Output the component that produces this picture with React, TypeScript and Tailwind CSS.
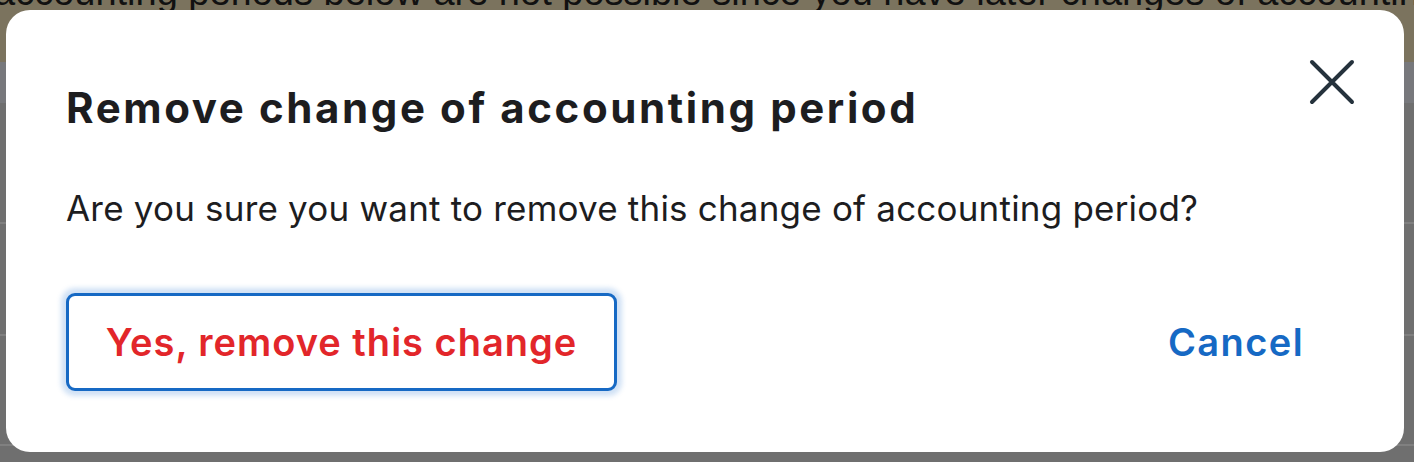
export default function App() {
  return (
    <div className="relative w-[1414px] h-[462px] overflow-hidden bg-[#6f6f6f] font-['Inter',sans-serif]">
      {/* dimmed page behind the dialog */}
      <div className="flex flex-col">
        <div className="h-[62px] bg-[#7b735e] overflow-hidden">
          <p className="-mt-[31px] -ml-[6px] whitespace-nowrap text-[38px] leading-[46px] text-[#111] font-['Liberation_Sans',sans-serif]">
            accounting periods below are not possible since you have later changes of accounting periods
          </p>
        </div>
        <div className="h-[41px] bg-[#77787c]" />
        <div className="h-[121px] border-b-2 border-[#808080]" />
        <div className="h-[112px] border-b-2 border-[#808080]" />
        <div className="h-[110px] border-b-2 border-[#808080]" />
      </div>

      {/* dialog */}
      <div className="absolute left-[6px] top-[10px] w-[1398px] h-[442px] rounded-[24px] bg-white">
        <div className="flex flex-col pl-[60px] pr-[48px] pt-[72px]">
          <div className="flex items-start justify-between">
            <h1 className="text-[42px] leading-[52px] font-bold text-[#1d1d1f] tracking-[2.6px]">
              Remove change of accounting period
            </h1>
            <button className="-mt-[24px] w-[48px] h-[48px] flex items-center justify-center">
              <svg width="46" height="46" viewBox="0 0 46 46" fill="none">
                <path d="M3 3L43 43M43 3L3 43" stroke="#25323c" strokeWidth="4" strokeLinecap="round" />
              </svg>
            </button>
          </div>
          <p className="mt-[52px] text-[35px] leading-[44px] tracking-[0.2px] text-[#1d1d1f]">
            Are you sure you want to remove this change of accounting period?
          </p>
          <div className="mt-[63px] flex items-center justify-between pr-[52px]">
            <button className="w-[551px] h-[98px] rounded-[9px] border-[3px] border-[#1669c4] bg-white text-[38px] tracking-[1px] font-semibold text-[#e2262a] shadow-[0_0_5px_5px_rgba(40,120,210,0.22)]">
              Yes, remove this change
            </button>
            <button className="text-[38px] tracking-[1.4px] font-semibold text-[#1669c4]">Cancel</button>
          </div>
        </div>
      </div>
    </div>
  );
}
